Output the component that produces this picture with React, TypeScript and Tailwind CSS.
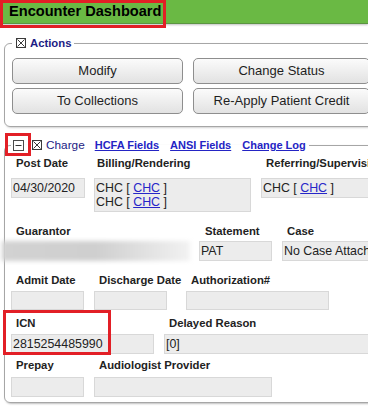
import React from "react";

const XBox = () => (
  <svg width="10" height="10" viewBox="0 0 10 10" className="shrink-0 block">
    <rect x="0.5" y="0.5" width="9" height="9" fill="white" stroke="#3a3a3a" strokeWidth="1" />
    <path d="M1.5 1.5 L8.5 8.5 M8.5 1.5 L1.5 8.5" stroke="#3a3a3a" strokeWidth="1" />
  </svg>
);

const MinusBox = () => (
  <svg width="11" height="11" viewBox="0 0 11 11" className="shrink-0 block">
    <rect x="0.5" y="0.5" width="10" height="10" fill="white" stroke="#4a4a4a" strokeWidth="1" />
    <path d="M2.5 5.5 L8.5 5.5" stroke="#333" strokeWidth="1" />
  </svg>
);

const Label = ({ children, className = "" }: { children: React.ReactNode; className?: string }) => (
  <div
    className={`h-[14px] leading-[14px] text-[11.3px] font-bold text-[#222] whitespace-nowrap overflow-visible ${className}`}
  >
    {children}
  </div>
);

const Box = ({
  children,
  className = "",
  lh = "leading-[18px]",
}: {
  children?: React.ReactNode;
  className?: string;
  lh?: string;
}) => (
  <div
    className={`bg-[#ececec] border border-[#d8d8d8] text-[12.4px] text-[#222] pl-[1px] whitespace-nowrap overflow-hidden ${lh} ${className}`}
  >
    {children}
  </div>
);

const Lnk = ({ children }: { children: React.ReactNode }) => (
  <span className="text-[#2626c8] underline">{children}</span>
);

const Btn = ({ children }: { children: React.ReactNode }) => (
  <div className="h-[26px] flex items-center justify-center rounded-[5px] border border-[#8e8e8e] bg-gradient-to-b from-[#fbfbfb] to-[#e2e2e2] text-[13px] text-[#1e1e1e] whitespace-nowrap">
    {children}
  </div>
);

export default function App() {
  return (
    <div className="relative w-[368px] h-[413px] overflow-hidden bg-white font-['Liberation_Sans',Arial,sans-serif]">
      <div className="h-[24px] bg-[#6ab944] border-b border-[#5b9442] shadow-[0_1px_2px_rgba(0,0,0,0.25)] pl-[9px] text-[14.6px] leading-[23px] font-bold text-black">
        Encounter Dashboard
      </div>

      <div className="w-[430px] pl-[4px]">
        <fieldset className="mt-[12px] border border-[#a6a6a6] rounded-[6px] pl-[7px] pt-[8px] pb-[12px] shadow-[1px_1px_2px_rgba(0,0,0,0.18)]">
          <legend className="pl-[4px] pr-[3px] h-[14px]">
            <div className="flex items-center h-[14px]">
              <XBox />
              <span className="ml-[4px] text-[11.3px] leading-[14px] font-bold text-[#1c1c84]">Actions</span>
            </div>
          </legend>
          <div className="grid grid-cols-[171px_177px] gap-x-[10px] gap-y-[4px]">
            <Btn>Modify</Btn>
            <Btn>Change Status</Btn>
            <Btn>To Collections</Btn>
            <Btn>Re-Apply Patient Credit</Btn>
          </div>
        </fieldset>

        <fieldset className="mt-[11px] border border-[#a6a6a6] rounded-[6px] pl-[6px] pt-[4px] pb-[5px] shadow-[1px_1px_2px_rgba(0,0,0,0.25)]">
          <legend className="pl-[2px] pr-[3px] h-[14px]">
            <div className="flex items-center h-[14px]">
              <MinusBox />
              <div className="ml-[8px]">
                <XBox />
              </div>
              <span className="ml-[4px] text-[11.8px] leading-[14px] text-[#1c1c84]">Charge</span>
              <span className="ml-[10px] text-[11px] leading-[14px] font-bold text-[#2424c4] underline">HCFA Fields</span>
              <span className="ml-[11px] text-[11px] leading-[14px] font-bold text-[#2424c4] underline">ANSI Fields</span>
              <span className="ml-[11px] text-[11px] leading-[14px] font-bold text-[#2424c4] underline">Change Log</span>
            </div>
          </legend>

          {/* Row 1 */}
          <div className="flex items-start">
            <div className="w-[74px]">
              <Label className="pl-[5px] mb-[8px]">Post Date</Label>
              <Box className="h-[20px]">04/30/2020</Box>
            </div>
            <div className="ml-[9px] w-[157px]">
              <Label className="pl-[3px] mb-[8px]">Billing/Rendering</Label>
              <Box className="h-[34px] pt-[2px]" lh="leading-[14px]">
                <div>
                  CHC [ <Lnk>CHC</Lnk> ]
                </div>
                <div>
                  CHC [ <Lnk>CHC</Lnk> ]
                </div>
              </Box>
            </div>
            <div className="ml-[10px] w-[150px]">
              <Label className="pl-[5px] mb-[8px]">Referring/Supervising</Label>
              <Box className="h-[20px]">
                CHC [ <Lnk>CHC</Lnk> ]
              </Box>
            </div>
          </div>

          {/* Row 2 */}
          <div className="flex items-start mt-[12px]">
            <div className="w-[178px]">
              <Label className="pl-[5px] mb-[3px]">Guarantor</Label>
              <div className="h-[20px] -ml-[9px] w-[188px] bg-gradient-to-r from-[#d2d2d2] via-[#cfcfcf] to-[#f2f2f2] blur-[2px]" />
            </div>
            <div className="ml-[10px] w-[73px]">
              <Label className="pl-[6px] mb-[3px]">Statement</Label>
              <Box className="h-[20px]">PAT</Box>
            </div>
            <div className="ml-[10px] w-[110px]">
              <Label className="pl-[5px] mb-[3px]">Case</Label>
              <Box className="h-[20px]">No Case Attached</Box>
            </div>
          </div>

          {/* Row 3 */}
          <div className="flex items-start mt-[12px]">
            <div className="w-[73px]">
              <Label className="pl-[5px] mb-[4px]">Admit Date</Label>
              <Box className="h-[19px]" />
            </div>
            <div className="ml-[10px] w-[73px]">
              <Label className="pl-[5px] mb-[4px]">Discharge Date</Label>
              <Box className="h-[19px]" />
            </div>
            <div className="ml-[19px] w-[143px]">
              <Label className="pl-[5px] mb-[4px]">Authorization#</Label>
              <Box className="h-[19px]" />
            </div>
          </div>

          {/* Row 4 */}
          <div className="flex items-start mt-[6px]">
            <div className="w-[143px]">
              <Label className="pl-[5px] mb-[4px]">ICN</Label>
              <Box className="h-[20px]">2815254485990</Box>
            </div>
            <div className="ml-[10px] w-[220px]">
              <Label className="pl-[5px] mb-[4px]">Delayed Reason</Label>
              <Box className="h-[20px]">[0]</Box>
            </div>
          </div>

          {/* Row 5 */}
          <div className="flex items-start mt-[4px]">
            <div className="w-[73px]">
              <Label className="pl-[5px] mb-[5px]">Prepay</Label>
              <Box className="h-[20px]" />
            </div>
            <div className="ml-[10px] w-[178px]">
              <Label className="pl-[5px] mb-[5px]">Audiologist Provider</Label>
              <Box className="h-[20px]" />
            </div>
          </div>
        </fieldset>
      </div>

      {/* annotation boxes */}
      <div className="absolute left-0 top-0 w-[166px] h-[28px] border-[3px] border-[#e21f26]" />
      <div className="absolute left-[5px] top-[133px] w-[26px] h-[23px] border-[3px] border-[#e21f26]" />
      <div className="absolute left-[3px] top-[310px] w-[108px] h-[45px] border-[3px] border-[#e21f26]" />
    </div>
  );
}
